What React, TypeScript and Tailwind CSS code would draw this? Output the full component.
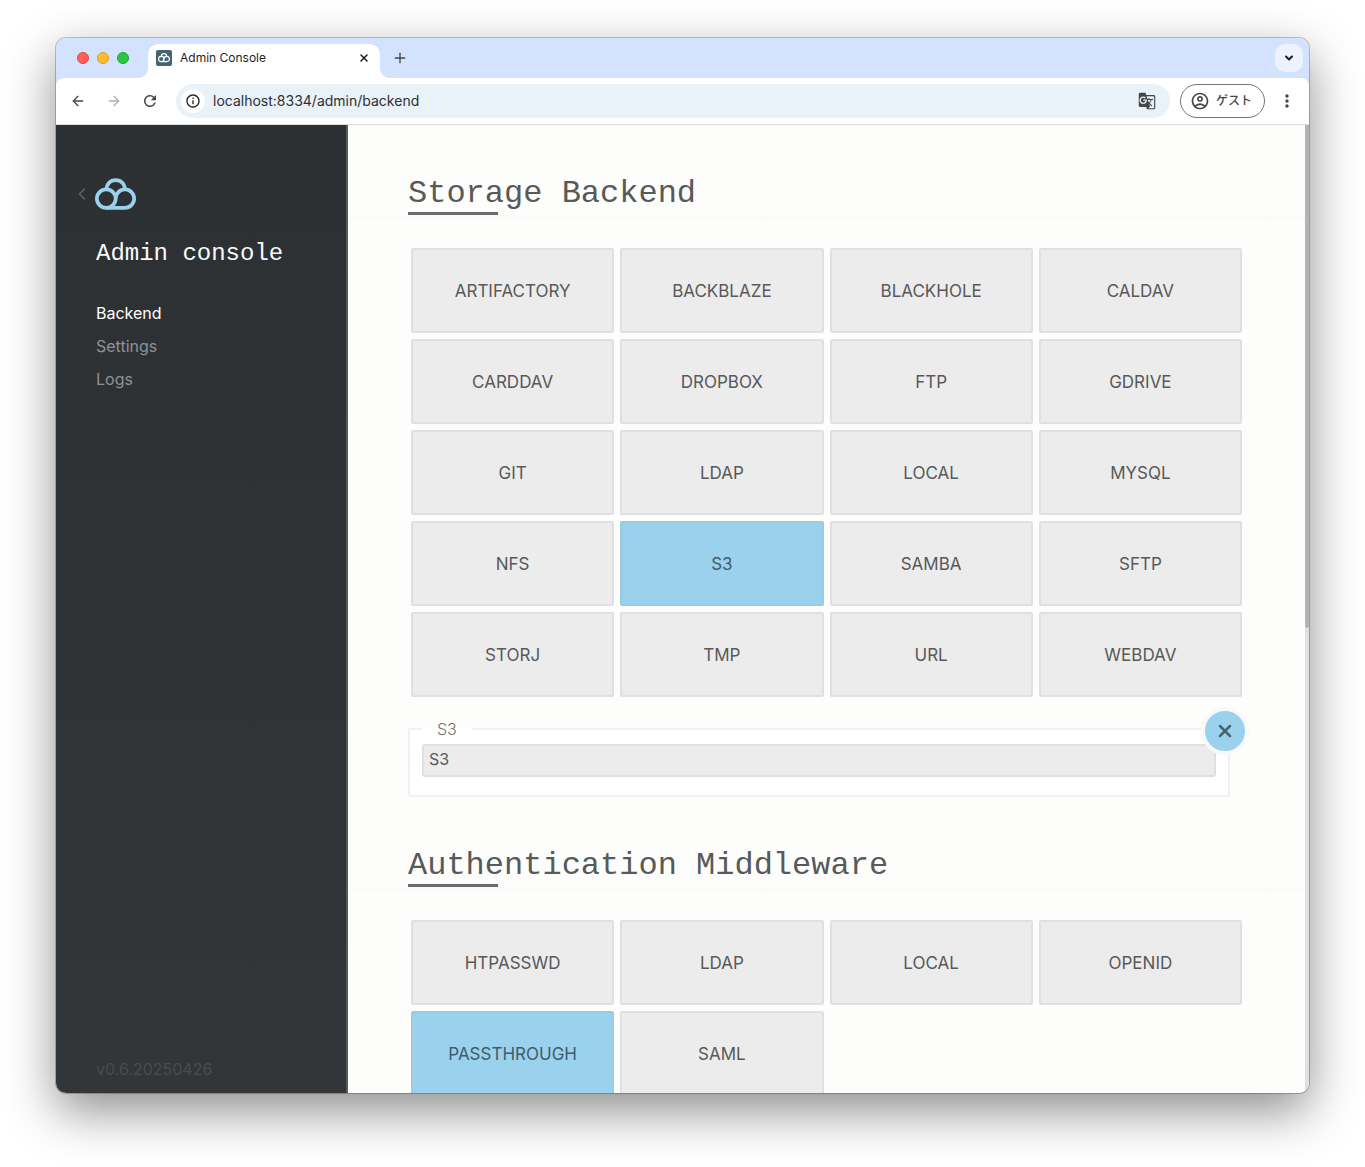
import { ArrowLeft, ArrowRight, ChevronDown, ChevronLeft, Plus, X } from 'lucide-react'
import { MdGTranslate, MdMoreVert, MdOutlineAccountCircle, MdOutlineInfo, MdRefresh } from 'react-icons/md'

const BACKENDS = [
  'ARTIFACTORY', 'BACKBLAZE', 'BLACKHOLE', 'CALDAV',
  'CARDDAV', 'DROPBOX', 'FTP', 'GDRIVE',
  'GIT', 'LDAP', 'LOCAL', 'MYSQL',
  'NFS', 'S3', 'SAMBA', 'SFTP',
  'STORJ', 'TMP', 'URL', 'WEBDAV',
]

const MIDDLEWARES = ['HTPASSWD', 'LDAP', 'LOCAL', 'OPENID', 'PASSTHROUGH', 'SAML']

const NAV = ['Backend', 'Settings', 'Logs']

function CloudLogo({ className, strokeWidth }: { className: string; strokeWidth: number }) {
  return (
    <svg className={className} viewBox="0 0 40 31" fill="none" stroke="currentColor" strokeWidth={strokeWidth} aria-hidden="true">
      <ellipse cx="11" cy="20" rx="9.200" ry="9" />
      <path d="M11.200 11.500C11.200 5.800 15 2 20.200 2s9 3.800 9 9.500" />
      <path d="M20.200 20c0-5 4-9 9-9a9 9 0 0 1 0 18H11" />
    </svg>
  )
}

function TabBar() {
  return (
    <div className="flex h-10 items-end bg-[#d3e3fd] pl-[21px] pr-1.5">
      <div className="flex gap-2 self-center">
        <span className="h-3 w-3 rounded-full border border-[#e14640] bg-[#ff5f57]" />
        <span className="h-3 w-3 rounded-full border border-[#dfa023] bg-[#febc2e]" />
        <span className="h-3 w-3 rounded-full border border-[#1fa630] bg-[#28c840]" />
      </div>
      <div className="relative ml-[19px] flex h-[34px] w-[232px] items-center rounded-t-[10px] bg-white pb-1.5 pl-2 pr-2.5">
        <span className="absolute -left-2.5 bottom-0 h-2.5 w-2.5 bg-[radial-gradient(circle_at_0_0,transparent_10px,#fff_10px)]" />
        <span className="absolute -right-2.5 bottom-0 h-2.5 w-2.5 bg-[radial-gradient(circle_at_100%_0,transparent_10px,#fff_10px)]" />
        <span className="grid h-4 w-4 place-items-center rounded-xs bg-[#466372] text-white">
          <CloudLogo className="w-3" strokeWidth={4} />
        </span>
        <span className="ml-2 flex-1 text-xs text-[#1f1f1f]">Admin Console</span>
        <button type="button" aria-label="Close tab" className="text-[#1f1f1f]">
          <X size={12} strokeWidth={3} />
        </button>
      </div>
      <button type="button" aria-label="New tab" className="ml-3 self-center text-[#474747]">
        <Plus size={16} strokeWidth={2} />
      </button>
      <button type="button" aria-label="Search tabs" className="ml-auto grid h-7 w-7 place-items-center self-center rounded-[10px] bg-[#ecf2fe] text-[#1f1f1f]">
        <ChevronDown size={12} strokeWidth={4} />
      </button>
    </div>
  )
}

function Toolbar() {
  return (
    <div className="bg-[#d3e3fd]">
      <div className="flex h-[47px] items-center rounded-t-lg border-b border-[#dcdcdc] bg-white pl-3.5 pr-3 text-[#474747]">
        <button type="button" aria-label="Back"><ArrowLeft size={16} strokeWidth={2} /></button>
        <button type="button" aria-label="Forward" className="ml-5 text-[#b0b0b0]"><ArrowRight size={16} strokeWidth={2} /></button>
        <button type="button" aria-label="Reload" className="ml-[19px]"><MdRefresh size={18} /></button>
        <div className="ml-[17px] flex h-[34px] flex-1 items-center rounded-full bg-[#e9f1f9] pl-[5px] pr-3.5">
          <span className="grid h-6 w-6 place-items-center rounded-full bg-white text-[#1f1f1f]">
            <MdOutlineInfo size={16} />
          </span>
          <input
            aria-label="Address"
            defaultValue="localhost:8334/admin/backend"
            className="ml-2 min-w-0 flex-1 bg-transparent text-sm text-[#303030] outline-none"
          />
          <button type="button" aria-label="Translate this page"><MdGTranslate size={18} /></button>
        </div>
        <button type="button" className="ml-2.5 flex h-[34px] items-center gap-1.5 rounded-full border border-[#747775] pl-[9px] pr-3 text-xs font-medium">
          <MdOutlineAccountCircle size={20} />
          ゲスト
        </button>
        <button type="button" aria-label="Menu" className="ml-3"><MdMoreVert size={20} /></button>
      </div>
    </div>
  )
}

function Sidebar() {
  return (
    <aside className="flex w-[292px] shrink-0 flex-col border-r-2 border-[#57595b] bg-linear-to-b from-[#2c3033] to-[#323639] px-10 pb-3 pt-[53px]">
      <a href="#home" aria-label="Back to files" className="-ml-6 flex items-center">
        <ChevronLeft size={20} strokeWidth={2} className="mr-[3px] text-[#606365]" />
        <CloudLogo className="h-8 w-[41px] text-[#9ad1ed]" strokeWidth={3.6} />
      </a>
      <h1 className="mt-7 font-[Liberation_Mono,monospace] text-2xl text-[#f9f9fa]">Admin console</h1>
      <nav className="mt-[27px] flex flex-col">
        {NAV.map((item, i) => (
          <a key={item} href={`#${item.toLowerCase()}`} className={`h-[33px] leading-[33px] ${i === 0 ? 'text-white' : 'text-[#8f9294]'}`}>
            {item}
          </a>
        ))}
      </nav>
      <p className="mt-auto text-[#484c4f]">v0.6.20250426</p>
    </aside>
  )
}

function SectionTitle({ children }: { children: string }) {
  return (
    <div>
      <h2 className="font-[Liberation_Mono,monospace] text-[32px] leading-9 text-[#57595a]">{children}</h2>
      <div className="h-[3px] w-[90px] bg-[#6a6b6e]" />
      <div className="-mx-15 h-2 bg-linear-to-b from-[#fafafa] to-[#fdfdfb]" />
    </div>
  )
}

function TileGrid({ items, selected }: { items: string[]; selected: string }) {
  return (
    <div className="mt-[25px] grid grid-cols-4 gap-1.5 px-[3px]">
      {items.map((item) => (
        <button
          key={item}
          type="button"
          aria-pressed={item === selected}
          className={`h-[85px] rounded-xs border-2 pt-0.5 text-[17px] ${
            item === selected
              ? 'border-[#97cbe6] bg-[#9ad1ed] text-[#3f5c6b]'
              : 'border-[#e0e0e2] bg-[#ececec] text-[#57595a]'
          }`}
        >
          {item}
        </button>
      ))}
    </div>
  )
}

export default function App() {
  return (
    <div className="h-screen bg-white px-14 pb-[74px] pt-[38px] font-[Inter,Noto_Sans_CJK_JP,sans-serif]">
      <div className="flex h-full flex-col overflow-hidden rounded-[10px] shadow-[0_0_0_1px_rgba(0,0,0,0.22),0_18px_50px_rgba(0,0,0,0.45)]">
        <TabBar />
        <Toolbar />
        <div className="flex min-h-0 flex-1">
          <Sidebar />
          <main className="min-w-0 flex-1 overflow-hidden bg-[#fdfdfb] px-15 pt-[51px]">
            <section>
              <SectionTitle>Storage Backend</SectionTitle>
              <TileGrid items={BACKENDS} selected="S3" />
              <form className="relative mt-5 pr-[15px]">
                <fieldset className="rounded-xs border-2 border-[#f1f1f1] bg-white px-3 pb-[18px]">
                  <legend className="px-[15px] font-light text-[#6f7172]">S3</legend>
                  <input
                    aria-label="S3"
                    defaultValue="S3"
                    readOnly
                    className="mt-[3px] block h-[33px] w-full rounded-[3px] border-2 border-[#e0e0e0] bg-[#ececec] px-[5px] pb-[3px] text-base text-[#57595a] outline-none"
                  />
                </fieldset>
                <button
                  type="button"
                  aria-label="Remove S3"
                  className="absolute -right-1 -top-2.5 grid h-12 w-12 place-items-center rounded-full border-4 border-[#f9f9fa] bg-[#9ad1ed] text-[#466372]"
                >
                  <X size={20} strokeWidth={3} />
                </button>
              </form>
            </section>
            <section className="mt-[51px]">
              <SectionTitle>Authentication Middleware</SectionTitle>
              <TileGrid items={MIDDLEWARES} selected="PASSTHROUGH" />
            </section>
          </main>
          <div className="w-1 bg-[#e0e0e0]">
            <div className="h-[52%] rounded-b-xs bg-[#b4b4b4]" />
          </div>
        </div>
      </div>
    </div>
  )
}
